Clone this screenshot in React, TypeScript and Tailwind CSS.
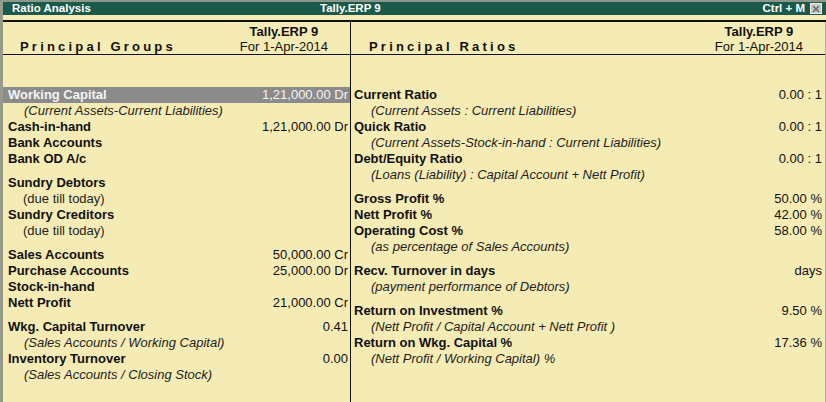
type Row = { label?: string; value?: string; sub?: string; plain?: string; hl?: boolean };

const leftGroups: Row[][] = [
  [
    { label: "Working Capital", value: "1,21,000.00 Dr", hl: true },
    { sub: "(Current Assets-Current Liabilities)" },
    { label: "Cash-in-hand", value: "1,21,000.00 Dr" },
    { label: "Bank Accounts" },
    { label: "Bank OD A/c" },
  ],
  [
    { label: "Sundry Debtors" },
    { plain: "(due till today)" },
    { label: "Sundry Creditors" },
    { plain: "(due till today)" },
  ],
  [
    { label: "Sales Accounts", value: "50,000.00 Cr" },
    { label: "Purchase Accounts", value: "25,000.00 Dr" },
    { label: "Stock-in-hand" },
    { label: "Nett Profit", value: "21,000.00 Cr" },
  ],
  [
    { label: "Wkg. Capital Turnover", value: "0.41" },
    { sub: "(Sales Accounts / Working Capital)" },
    { label: "Inventory Turnover", value: "0.00" },
    { sub: "(Sales Accounts / Closing Stock)" },
  ],
];

const rightGroups: Row[][] = [
  [
    { label: "Current Ratio", value: "0.00 : 1" },
    { sub: "(Current Assets : Current Liabilities)" },
    { label: "Quick Ratio", value: "0.00 : 1" },
    { sub: "(Current Assets-Stock-in-hand : Current Liabilities)" },
    { label: "Debt/Equity Ratio", value: "0.00 : 1" },
    { sub: "(Loans (Liability) : Capital Account + Nett Profit)" },
  ],
  [
    { label: "Gross Profit %", value: "50.00 %" },
    { label: "Nett Profit %", value: "42.00 %" },
    { label: "Operating Cost %", value: "58.00 %" },
    { sub: "(as percentage of Sales Accounts)" },
  ],
  [
    { label: "Recv. Turnover in days", value: "days" },
    { sub: "(payment performance of Debtors)" },
  ],
  [
    { label: "Return on Investment %", value: "9.50 %" },
    { sub: "(Nett Profit / Capital Account + Nett Profit )" },
    { label: "Return on Wkg. Capital %", value: "17.36 %" },
    { sub: "(Nett Profit / Working Capital) %" },
  ],
];

function RowLine({ row, side }: { row: Row; side: "left" | "right" }) {
  const pl = side === "left" ? "pl-[5px]" : "pl-[3px]";
  const pr = side === "left" ? "pr-[2px]" : "pr-[3px]";
  if (row.sub) {
    return (
      <div className={`h-[16px] leading-[16px] italic text-[#1e1e1e] ${side === "left" ? "pl-[21px]" : "pl-[20px]"}`}>
        {row.sub}
      </div>
    );
  }
  if (row.plain) {
    return <div className="h-[16px] leading-[16px] text-[#1e1e1e] pl-[20px]">{row.plain}</div>;
  }
  return (
    <div
      className={`h-[16px] leading-[16px] flex justify-between ${pl} ${pr} ${
        row.hl ? "bg-[#8b8b8b] text-[#f4f4f4]" : "text-[#111]"
      }`}
    >
      <span className="font-bold">{row.label}</span>
      {row.value && <span>{row.value}</span>}
    </div>
  );
}

function Column({ groups, side }: { groups: Row[][]; side: "left" | "right" }) {
  return (
    <div className="flex flex-col gap-[8px] pt-[32px]">
      {groups.map((g, i) => (
        <div key={i} className="flex flex-col">
          {g.map((r, j) => (
            <RowLine key={j} row={r} side={side} />
          ))}
        </div>
      ))}
    </div>
  );
}

function HeaderCell({ title, pl }: { title: string; pl: string }) {
  return (
    <div className={`flex items-end justify-between pt-[2px] pr-[22px] ${pl} leading-[15px]`}>
      <span className="font-bold text-[13px] tracking-[3.2px] text-[#111]">{title}</span>
      <div className="flex flex-col items-center text-[#111]">
        <span className="font-bold">Tally.ERP 9</span>
        <span>For 1-Apr-2014</span>
      </div>
    </div>
  );
}

export default function App() {
  return (
    <div className="w-[826px] h-[402px] overflow-hidden bg-[#f5ebb4] flex flex-col border-l-[3px] border-[#979b8e] font-['Liberation_Sans',Arial,sans-serif] text-[13px]">
      <div className="h-[2px] bg-[#8d978c]" />
      <div className="h-[13px] bg-[#1b5a4a] flex items-center text-white text-[11.5px] font-bold leading-[13px]">
        <span className="pl-[9px] w-[317px]">Ratio Analysis</span>
        <span className="flex-1">Tally.ERP 9</span>
        <span className="pr-[5px]">Ctrl + M</span>
        <span className="w-[12px] h-[11px] mr-[4px] bg-[#c9c9c4] border border-[#eeeeee] flex items-center justify-center">
          <svg width="8" height="8" viewBox="0 0 8 8">
            <path d="M1 1 L7 7 M7 1 L1 7" stroke="#6b6b6b" strokeWidth="1.6" />
          </svg>
        </span>
      </div>
      <div className="h-[5px]" />
      <div className="h-[2px] bg-[#111]" />
      <div className="flex-1 flex border-r border-[#b9b08a]">
        <div className="w-[348px] flex flex-col border-r border-[#111]">
          <div className="h-[33px] border-b border-[#111]">
            <HeaderCell title="Principal Groups" pl="pl-[17px]" />
          </div>
          <Column groups={leftGroups} side="left" />
        </div>
        <div className="flex-1 flex flex-col">
          <div className="h-[33px] border-b border-[#111]">
            <HeaderCell title="Principal Ratios" pl="pl-[18px]" />
          </div>
          <Column groups={rightGroups} side="right" />
        </div>
      </div>
    </div>
  );
}
